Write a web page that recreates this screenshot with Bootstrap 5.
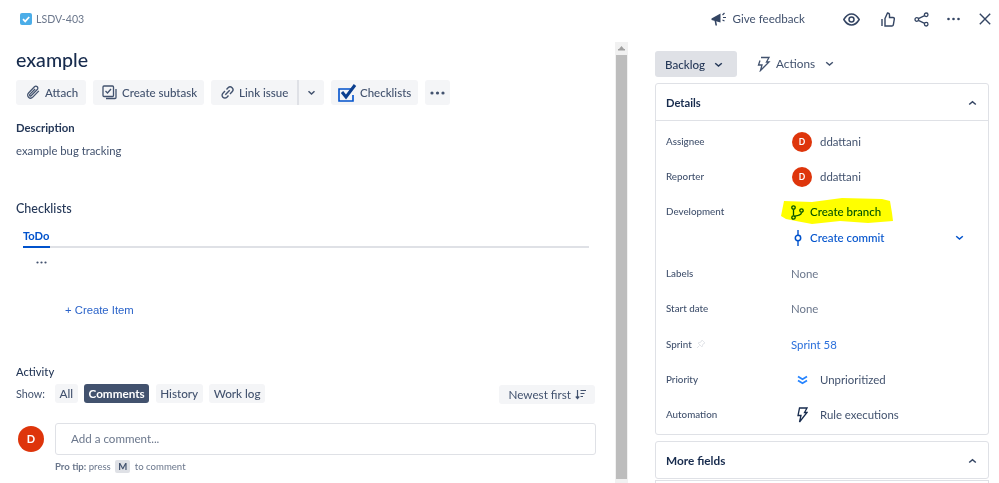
<!DOCTYPE html>
<html lang="en">
<head>
<meta charset="utf-8">
<title>LSDV-403</title>
<link href="https://cdn.jsdelivr.net/npm/bootstrap@5.3.0/dist/css/bootstrap.min.css" rel="stylesheet">
<script src="https://cdn.jsdelivr.net/npm/bootstrap@5.3.0/dist/js/bootstrap.bundle.min.js"></script>
<style>
html,body{height:483px;overflow:hidden;background:#fff}
body{font-family:"Lato","Noto Sans",sans-serif;font-size:11.5px;color:#42526e;line-height:16px}
svg{display:block;flex:none}
.shell{height:483px}
.issue-key{color:#6b778c;font-size:10.6px;gap:4px;height:38px;margin-left:4px}
.feedback{gap:5px;font-size:11.6px;color:#42526e;margin-right:38px}
.top-icons{gap:18px}
.gap-eye{margin-right:3px}
.gap-thumb{margin-right:1px}
.gap-share{margin-right:-1px}
.left-pane{width:615px;padding-left:16px}
.issue-title{font-size:19.6px;line-height:24px;font-weight:500;color:#172b4d;margin:10px 0 8px}
.act-row{gap:7px}
.act{height:25px;background:#f4f5f7;border-radius:3px;color:#42526e;font-size:11.5px;padding:0 9px;gap:4px;white-space:nowrap;font-weight:500}
.act-split{border-left:2px solid #dfe1e6;height:25px;width:27px}
.sect{font-size:11.3px;font-weight:700;color:#253858;line-height:16px}
.sect-chk{font-size:12.5px;font-weight:500;margin-top:42px}
.sect-act{font-size:11.2px;font-weight:500;margin-top:46px}
.body-text{color:#42526e;font-size:11.3px}
.tab-line{margin:11px 7px 0;width:566px;border-bottom:2px solid #dfe1e6;height:20px}
.tab-on{display:inline-block;color:#0052cc;font-weight:700;font-size:11.2px;height:20px;border-bottom:2px solid #0052cc;padding:0;width:27px;line-height:16px}
.create-item{font-family:"Liberation Sans",sans-serif;color:#2a63c9;font-size:11.3px;margin-left:49px;margin-top:38px;line-height:16px}
.show-lbl{width:39px;font-size:10.8px}
.flt-row{gap:6.500px}
.flt{height:19px;background:#f4f5f7;border-radius:3px;padding:0 4.500px;font-size:11.7px;font-weight:500;color:#42526e;line-height:19px}
.flt-on{background:#42526e;color:#fff;font-weight:700}
.flt-sort{padding:0 9px;gap:4px;font-weight:400;margin-top:2px;font-size:11.7px}
.avatar-d{width:26px;height:26px;border-radius:50%;background:#de350b;color:#fff;font-size:11px;font-weight:700;flex:none}
.avatar-sm{width:20px;height:20px;font-size:8.5px;margin-left:1px}
.comment-box{width:541px;height:32px;border:1px solid #dfe1e6;border-radius:3px;padding-left:15px;color:#6b778c;font-size:11.6px}
.protip{font-size:9.6px;color:#6b778c;margin:4px 0 0 39px;line-height:16px}
.kbd-m{background:#dfe1e6;border-radius:2px;padding:1px 3px;margin:0 2px;font-weight:700;color:#42526e}
.sbar{width:13px;background:#f1f1f1;margin-top:42px;padding:0 1px}
.sbar-arrow{height:13px}
.sbar-thumb{height:424px;background:#bdbdbd}
.right-pane{width:334px;margin-left:27px}
.top-row{height:38px;margin-right:-2px}
.status-btn{height:26px;width:82px;background:#dfe1e6;border-radius:3px;color:#253858;font-weight:500;font-size:11.6px;padding:1px 10px 0;gap:9px}
.actions-btn{height:26px;margin-left:18px;gap:6px;color:#42526e;font-size:11.8px}
.panel{border:1px solid #dfe1e6;border-radius:3px}
.panel-head{height:37px;padding:1px 11px 0 10px;font-size:11.2px;font-weight:700;color:#172b4d;border-bottom:1px solid #dfe1e6}
.panel-head-more{font-size:11.8px;height:36px;border-bottom:0}
.panel-body{padding:3px 10px 2px}
.frow{height:35px}
.frow-dev{height:30px;margin-top:3px}
.frow-wide{height:36px}
.flabel{width:125px;font-size:9.8px;font-weight:500;color:#42526e;flex:none;padding-bottom:2px}
.fvalue{font-size:11.4px;color:#42526e;gap:8px}
.muted-none{color:#6b778c}
.blue-link{color:#2a6fdb}
.dev-link{color:#0052cc;font-weight:500;gap:6px;font-size:11.5px}
.commit-row{height:22px;padding-right:14px}
.commit-icon{margin:0 2px 0 3px}
.icon-slot{width:20px;margin-left:1px}
.hl-wrap{position:relative}
.hl-blob{position:absolute;left:-10px;top:-7px;mix-blend-mode:multiply}
.panel-end{border-top:1px solid #dfe1e6;height:10px;border-left:1px solid #dfe1e6;border-right:1px solid #dfe1e6;margin-top:1px}
</style>
</head>
<body>
<div class="shell d-flex">
  <div class="left-pane flex-none">
    <div class="d-flex align-items-center issue-key">
      <svg width="12" height="12" viewBox="0 0 12 12"><rect width="12" height="12" rx="2" fill="#4bade8"/><path d="M3 6.200l2.200 2.200L9.200 4" fill="none" stroke="#fff" stroke-width="1.700"/></svg>
      <span>LSDV-403</span>
    </div>
    <div class="issue-title">example</div>
    <div class="d-flex act-row align-items-center">
      <div class="act d-flex align-items-center" style="width:70px">
        <svg width="16" height="17" viewBox="0 0 14 16"><path d="M12.500 6.500L6.800 12.400a2.800 2.800 0 0 1-4-4l5.600-5.800a1.800 1.800 0 0 1 2.600 2.600L5.200 11a.8.8 0 0 1-1.200-1.200l5-5.100" fill="none" stroke="#42526e" stroke-width="1.200"/></svg>Attach</div>
      <div class="act d-flex align-items-center" style="width:111px">
        <svg width="16" height="15" viewBox="0 0 16 15"><rect x="1" y="1" width="10.500" height="10.500" rx="1" fill="none" stroke="#42526e" stroke-width="1.300"/><path d="M3.500 6l2 2 3.500-4" fill="none" stroke="#42526e" stroke-width="1.300"/><path d="M14 4v8.500a1 1 0 0 1-1 1H4" fill="none" stroke="#42526e" stroke-width="1.300"/></svg>Create subtask</div>
      <div class="act d-flex align-items-center pe-0" style="width:113px">
        <svg width="15" height="15" viewBox="0 0 15 15"><path d="M6.500 4.500l1.600-1.700a2.800 2.800 0 0 1 4 4L10 9M8.500 10.500l-1.600 1.700a2.800 2.800 0 0 1-4-4L5 6M5.300 9.700l4.400-4.400" fill="none" stroke="#42526e" stroke-width="1.400"/></svg>Link issue
        <span class="act-split d-flex align-items-center justify-content-center ms-auto"><svg width="9" height="6" viewBox="0 0 9 6"><path d="M1.500 1.200L4.500 4l3-2.800" fill="none" stroke="#42526e" stroke-width="1.500"/></svg></span></div>
      <div class="act d-flex align-items-center" style="width:87px;padding-left:6px;gap:2px">
        <svg width="21" height="20" viewBox="0 0 21 20"><path d="M16 6H2v12h14v-6" fill="none" stroke="#0052cc" stroke-width="1.600"/><path d="M5 9l4 5 9-12" fill="none" stroke="#0b3f8f" stroke-width="3"/></svg>Checklists</div>
      <div class="act d-flex align-items-center justify-content-center" style="width:25px;padding:0">
        <svg width="15" height="4" viewBox="0 0 15 4"><circle cx="2" cy="2" r="1.600" fill="#42526e"/><circle cx="7.500" cy="2" r="1.600" fill="#42526e"/><circle cx="13" cy="2" r="1.600" fill="#42526e"/></svg></div>
    </div>
    <div class="sect" style="margin-top:15px">Description</div>
    <div class="body-text" style="margin-top:7px">example bug tracking</div>
    <div class="sect sect-chk">Checklists</div>
    <div class="tab-line"><span class="tab-on">ToDo</span></div>
    <svg style="margin:13px 0 0 20px" width="11" height="3" viewBox="0 0 11 3"><circle cx="1.500" cy="1.500" r="1.100" fill="#42526e"/><circle cx="5.500" cy="1.500" r="1.100" fill="#42526e"/><circle cx="9.500" cy="1.500" r="1.100" fill="#42526e"/></svg>
    <div class="create-item">+ Create Item</div>
    <div class="sect sect-act">Activity</div>
    <div class="d-flex align-items-center" style="width:579px;margin-top:4px;height:19px">
      <span class="show-lbl">Show:</span>
      <div class="d-flex flt-row">
        <span class="flt">All</span><span class="flt flt-on">Comments</span><span class="flt">History</span><span class="flt">Work log</span>
      </div>
      <span class="flt flt-sort ms-auto d-flex align-items-center">Newest first
        <svg width="11" height="11" viewBox="0 0 11 11"><path d="M2.500 1v8.500M.8 7.500l1.700 2 1.700-2" fill="none" stroke="#42526e" stroke-width="1.200"/><path d="M5.500 1.500H11M5.500 4.500H9.500M5.500 7.500H8" stroke="#42526e" stroke-width="1.200"/></svg></span>
    </div>
    <div class="d-flex align-items-center" style="margin-top:20px">
      <span class="avatar-d d-flex align-items-center justify-content-center" style="margin:0 11px 0 2px">D</span>
      <div class="comment-box d-flex align-items-center">Add a comment...</div>
    </div>
    <div class="protip"><b>Pro tip:</b> press <span class="kbd-m">M</span> to comment</div>
  </div>

  <div class="sbar flex-none">
    <div class="sbar-arrow d-flex align-items-center justify-content-center"><svg width="7" height="5" viewBox="0 0 7 5"><path d="M3.500 0L6 3h1v1.500H0V3h1z" fill="#a0a0a0"/></svg></div>
    <div class="sbar-thumb"></div>
  </div>

  <div class="right-pane flex-none">
    <div class="d-flex align-items-center justify-content-end top-row">
      <div class="feedback d-flex align-items-center">
        <svg width="17" height="15" viewBox="0 0 16 15"><path d="M0 6.500L9 1.500v9L0 8z" fill="#344563"/><path d="M3 8.500l1 5h1.500l-.8-4.500" fill="#344563"/><path d="M11 3l2-2M11.500 5.500h3M11 8l2 1" stroke="#344563" stroke-width="1.200"/></svg>
        Give feedback</div>
      <div class="top-icons d-flex align-items-center">
        <svg class="gap-eye" width="17" height="13" viewBox="0 0 17 13"><path d="M.8 6.500C3 2.800 5.500 1 8.500 1s5.500 1.800 7.700 5.500C14 10.200 11.500 12 8.500 12S3 10.200.8 6.500z" fill="none" stroke="#344563" stroke-width="1.500"/><circle cx="8.500" cy="6.500" r="2.500" fill="none" stroke="#344563" stroke-width="1.500"/></svg>
        <svg class="gap-thumb" width="14" height="15" viewBox="0 0 14 15"><path d="M1 7v7M4 6.500L6.500 1c1.500 0 2 1 2 2v2.500h3.500c1 0 1.500.8 1.300 1.700l-1 5.800c-.2.600-.6 1-1.300 1H4z" fill="none" stroke="#344563" stroke-width="1.400"/></svg>
        <svg class="gap-share" width="15" height="15" viewBox="0 0 15 15"><circle cx="2.800" cy="7.500" r="1.800" fill="none" stroke="#344563" stroke-width="1.300"/><circle cx="12.200" cy="2.800" r="1.800" fill="none" stroke="#344563" stroke-width="1.300"/><circle cx="12.200" cy="12.200" r="1.800" fill="none" stroke="#344563" stroke-width="1.300"/><path d="M4.400 6.700l6.200-3.100M4.400 8.300l6.200 3.100" stroke="#344563" stroke-width="1.300"/></svg>
        <svg width="15" height="4" viewBox="0 0 14 4"><circle cx="2" cy="2" r="1.300" fill="#344563"/><circle cx="7" cy="2" r="1.300" fill="#344563"/><circle cx="12" cy="2" r="1.300" fill="#344563"/></svg>
        <svg width="12" height="12" viewBox="0 0 12 12"><path d="M.8.800l10.400 10.400M11.200.800L.8 11.200" stroke="#344563" stroke-width="1.400"/></svg>
      </div>
    </div>
    <div class="d-flex align-items-center" style="margin-top:13px">
      <div class="status-btn d-flex align-items-center">Backlog <svg width="9" height="6" viewBox="0 0 9 6"><path d="M1.200 1.200L4.500 4l3.300-2.800" fill="none" stroke="#253858" stroke-width="1.500"/></svg></div>
      <div class="actions-btn d-flex align-items-center">
        <svg width="16" height="16" viewBox="0 0 16 16"><path d="M6 1.500h8L11.500 6H14L5.500 14.500 7 9H3.500L5 4.500" fill="none" stroke="#42526e" stroke-width="1.300"/></svg>
        <span style="margin-left:-1px">Actions</span>
        <svg class="ms-1" width="9" height="6" viewBox="0 0 9 6"><path d="M1.200 1.200L4.500 4l3.300-2.800" fill="none" stroke="#42526e" stroke-width="1.500"/></svg>
      </div>
    </div>
    <div class="panel" style="margin-top:6px">
      <div class="panel-head d-flex align-items-center justify-content-between">Details
        <svg width="9" height="6" viewBox="0 0 9 6"><path d="M1.200 4.500L4.500 1.700l3.300 2.800" fill="none" stroke="#344563" stroke-width="1.500"/></svg></div>
      <div class="panel-body">
        <div class="frow d-flex align-items-center"><span class="flabel">Assignee</span><span class="fvalue d-flex align-items-center"><span class="avatar-d avatar-sm d-flex align-items-center justify-content-center">D</span>ddattani</span></div>
        <div class="frow d-flex align-items-center"><span class="flabel">Reporter</span><span class="fvalue d-flex align-items-center"><span class="avatar-d avatar-sm d-flex align-items-center justify-content-center">D</span>ddattani</span></div>
        <div class="frow-dev d-flex align-items-center"><span class="flabel">Development</span>
          <span class="fvalue dev-link d-flex align-items-center hl-wrap">
            <svg width="13" height="15" viewBox="0 0 13 15"><circle cx="2.500" cy="2.500" r="1.700" fill="none" stroke="#0052cc" stroke-width="1.300"/><circle cx="2.500" cy="12.500" r="1.700" fill="none" stroke="#0052cc" stroke-width="1.300"/><circle cx="10.500" cy="5.500" r="1.700" fill="none" stroke="#0052cc" stroke-width="1.300"/><path d="M2.500 4.500v6M10.500 7.500c0 2.500-3 3-7 3.800" fill="none" stroke="#0052cc" stroke-width="1.300"/></svg>
            Create branch
            <svg class="hl-blob" width="113" height="29" viewBox="0 0 113 29"><path d="M3 4l28 1 30-4 40 1 8 2 2 12 1 8-25 2-28-2-28 3-16-3-10-2-5-3z" fill="#ffff00"/></svg>
          </span></div>
        <div class="commit-row d-flex align-items-center justify-content-between"><span class="flabel"></span>
          <span class="fvalue dev-link d-flex align-items-center me-auto"><svg class="commit-icon" width="8" height="16" viewBox="0 0 8 16"><path d="M4 0v5M4 11v5" stroke="#0052cc" stroke-width="1.400"/><circle cx="4" cy="8" r="2.700" fill="none" stroke="#0052cc" stroke-width="1.500"/></svg>Create commit</span>
          <svg width="9" height="6" viewBox="0 0 9 6"><path d="M1.200 1.200L4.500 4l3.300-2.800" fill="none" stroke="#0052cc" stroke-width="1.500"/></svg></div>
        <div class="frow d-flex align-items-center" style="margin-top:7px"><span class="flabel">Labels</span><span class="fvalue muted-none">None</span></div>
        <div class="frow-wide d-flex align-items-center"><span class="flabel">Start date</span><span class="fvalue muted-none">None</span></div>
        <div class="frow d-flex align-items-center"><span class="flabel d-flex align-items-center gap-1">Sprint <svg width="10" height="10" viewBox="0 0 10 10"><path d="M6 1l3 3-2 1-1 3-4-4 3-1zM3.500 6.500L1 9" fill="none" stroke="#e4e6ea" stroke-width="1"/></svg></span><span class="fvalue blue-link">Sprint 58</span></div>
        <div class="frow d-flex align-items-center"><span class="flabel">Priority</span><span class="fvalue d-flex align-items-center">
          <span class="icon-slot d-flex justify-content-center"><svg width="11" height="10" viewBox="0 0 11 10"><path d="M1 1.500l4.500 2.800L10 1.500M1 5.500l4.500 2.800L10 5.500" fill="none" stroke="#2684ff" stroke-width="1.800"/></svg></span>Unprioritized</span></div>
        <div class="frow d-flex align-items-center"><span class="flabel">Automation</span><span class="fvalue d-flex align-items-center">
          <span class="icon-slot d-flex justify-content-center"><svg width="11" height="16" viewBox="0 0 11 16"><path d="M2.500 1H10L7.500 5.500H10L2.500 15 4 8.500H1z" fill="none" stroke="#172b4d" stroke-width="1.300"/></svg></span>Rule executions</span></div>
      </div>
    </div>
    <div class="panel" style="margin-top:6px">
      <div class="panel-head panel-head-more d-flex align-items-center justify-content-between">More fields
        <svg width="9" height="6" viewBox="0 0 9 6"><path d="M1.200 4.500L4.500 1.700l3.300 2.800" fill="none" stroke="#344563" stroke-width="1.500"/></svg></div>
    </div>
    <div class="panel-end"></div>
  </div>
</div>
</body>
</html>
